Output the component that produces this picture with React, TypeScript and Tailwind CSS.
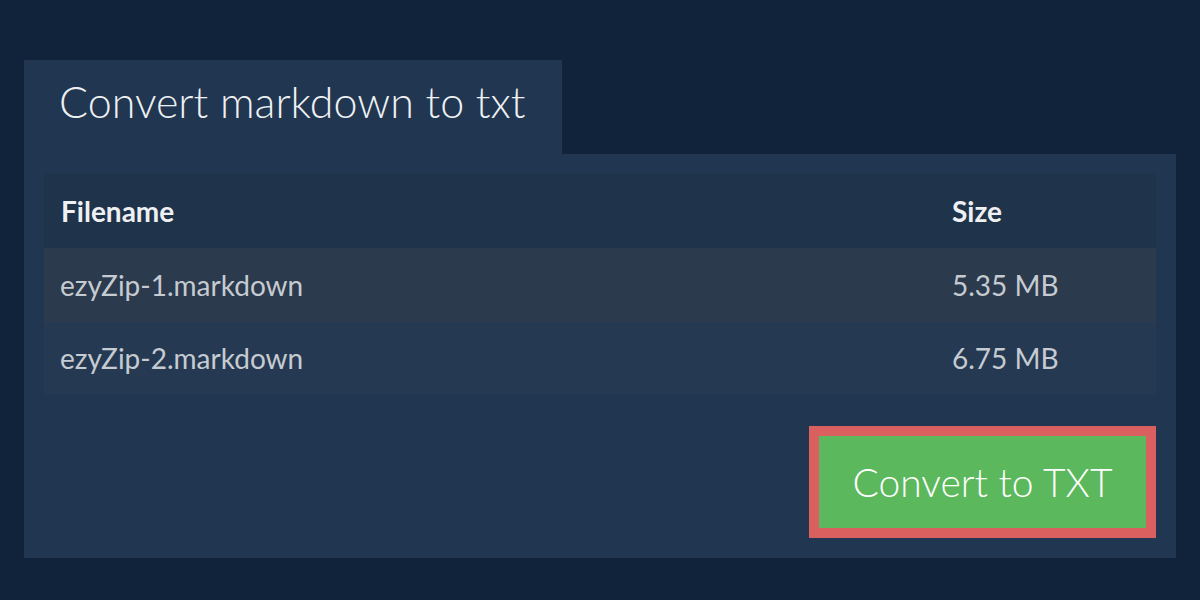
import React from 'react';

const files = [
  { name: 'ezyZip-1.markdown', size: '5.35 MB' },
  { name: 'ezyZip-2.markdown', size: '6.75 MB' },
];

const App: React.FC = () => {
  return (
    <div className="w-[1200px] h-[600px] bg-[#11233a] pt-[60px] px-6 font-['Lato','Liberation_Sans',sans-serif]">
      {/* Tab */}
      <div className="w-[538px] h-[94px] bg-[#213650] pl-[35px] pt-[16px]">
        <h1 className="text-[43px] font-light leading-[52px] text-[#eef0f2]">Convert markdown to txt</h1>
      </div>

      {/* Panel */}
      <div className="bg-[#213650] px-5 pt-5 pb-5 h-[404px]">
        <table className="w-full border-collapse">
          <thead>
            <tr className="bg-[#1f334a] h-[74px]">
              <th className="text-left pl-[17px] text-[28px] font-bold text-[#eef0f2]">Filename</th>
              <th className="text-left w-[204px] text-[28px] font-bold text-[#eef0f2]">Size</th>
            </tr>
          </thead>
          <tbody>
            {files.map((f, i) => (
              <tr key={f.name} className={`${i === 0 ? 'bg-[#2b3a4c]' : 'bg-[#253a52]'} ${i === 0 ? 'h-[74px]' : 'h-[72px]'}`}>
                <td className="pl-[16px] text-[28px] text-[#c6cbd2]">{f.name}</td>
                <td className="text-[28px] text-[#c6cbd2]">{f.size}</td>
              </tr>
            ))}
          </tbody>
        </table>

        <div className="flex justify-end mt-[32px]">
          <button className="w-[347px] h-[112px] border-[10px] border-[#d9605e] bg-[#5cb85c] text-[39px] font-light text-white">
            Convert to TXT
          </button>
        </div>
      </div>
    </div>
  );
};

export default App;
